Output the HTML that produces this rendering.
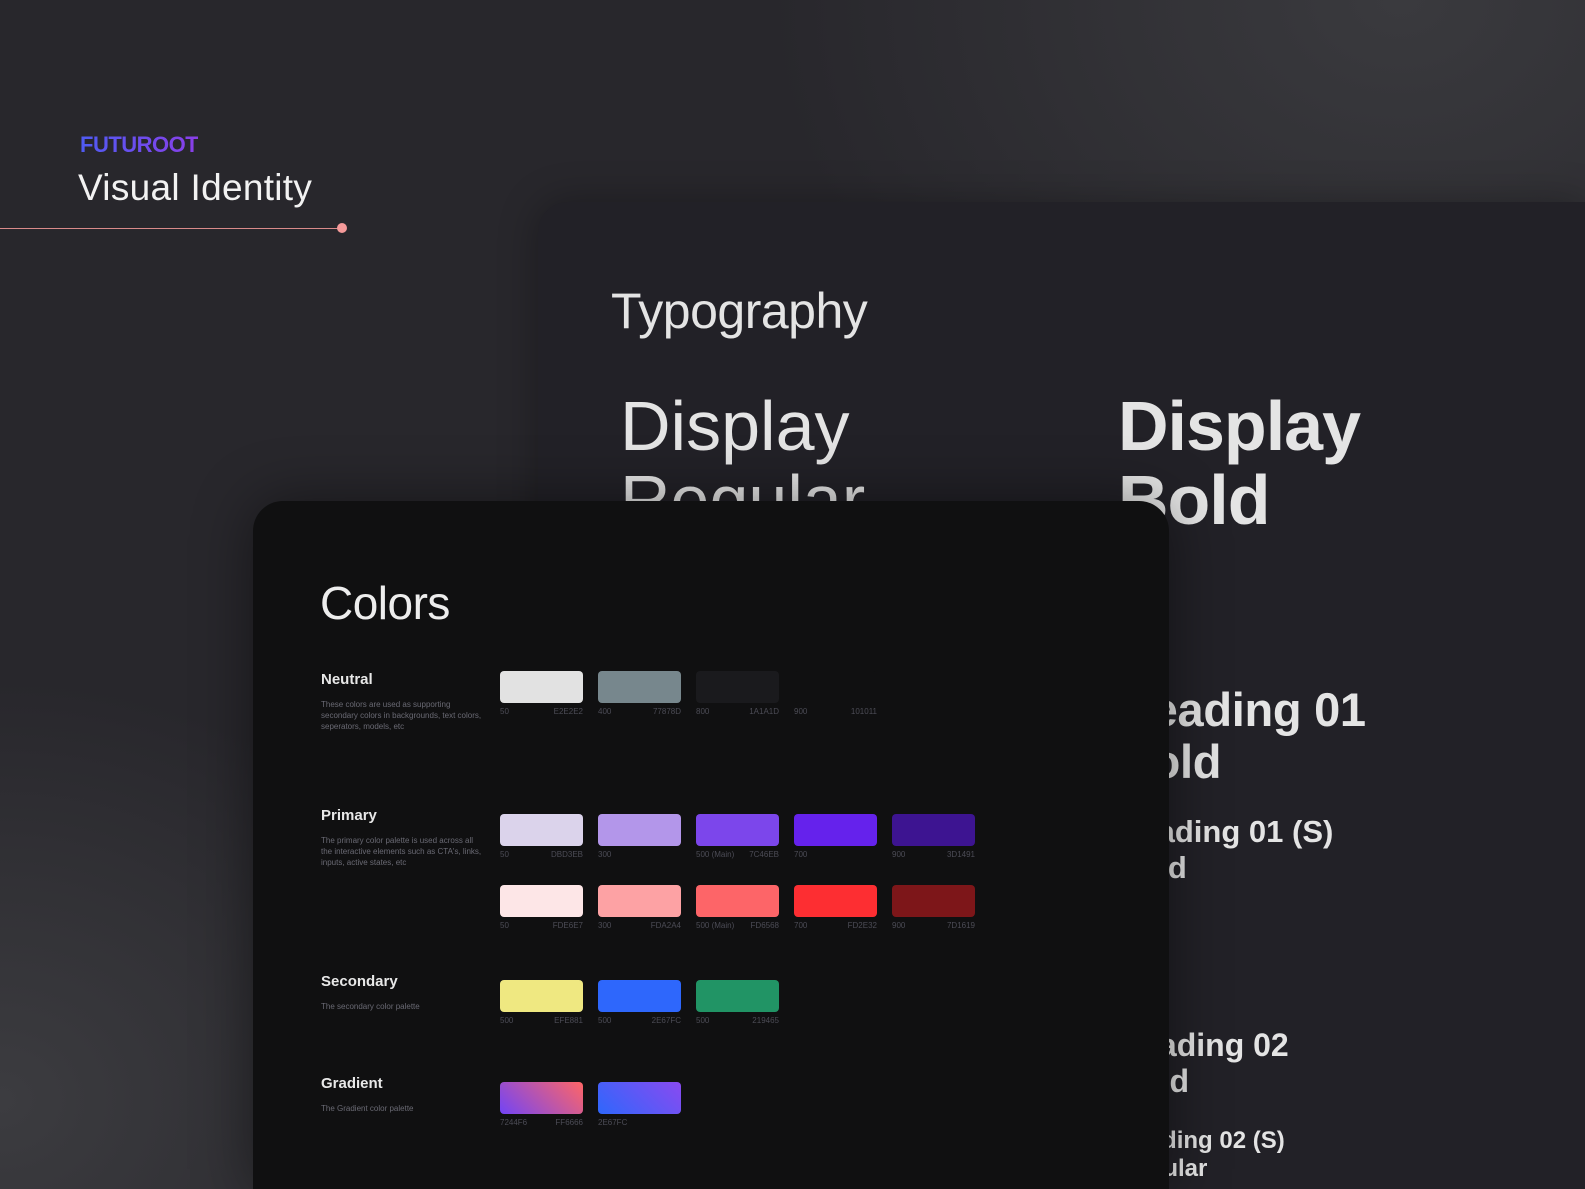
<!DOCTYPE html>
<html><head><meta charset="utf-8"><style>
*{margin:0;padding:0;box-sizing:border-box}
html,body{width:1585px;height:1189px;overflow:hidden}
body{position:relative;font-family:"Liberation Sans",sans-serif;
background:radial-gradient(ellipse 900px 700px at 1400px 0px,#3a3a3e 0%,rgba(58,58,62,0) 70%),radial-gradient(ellipse 700px 600px at 0px 1100px,#3c3c40 0%,rgba(60,60,64,0) 70%),#28272c;}
.abs{position:absolute}
.logo{left:80px;top:132px;font-weight:900;font-size:22px;letter-spacing:-0.5px;background:linear-gradient(90deg,#4f5bf2,#8a3fe8);-webkit-background-clip:text;color:transparent}
.vi{left:78px;top:167px;font-size:37px;color:#f2f2f2;letter-spacing:0.3px}
.line{left:0;top:228px;width:343px;height:1px;background:#d98a8a}
.dot{left:337px;top:223px;width:10px;height:10px;border-radius:50%;background:#f59a9a}
.back{left:538px;top:202px;width:1047px;height:987px;border-radius:30px 0 0 0;background:#222127;box-shadow:0 0 40px rgba(0,0,0,.3);overflow:hidden}
.front{left:253px;top:501px;width:916px;height:688px;border-radius:30px 30px 0 0;background:#101011;box-shadow:0 0 60px rgba(0,0,0,.45)}
.t{color:#e4e4e4}
.swatch{position:absolute;width:83px;height:32px;border-radius:4px}
.lab{position:absolute;width:83px;font-size:8px;color:#4c4c56;display:flex;justify-content:space-between}
.h{position:absolute;left:68px;font-size:15px;font-weight:bold;color:#e8e8e8}
.d{position:absolute;left:68px;font-size:8px;line-height:11px;color:#6a6a74;width:165px}
</style></head><body>
<div class="abs logo">FUTUROOT</div>
<div class="abs vi">Visual Identity</div>
<div class="abs line"></div><div class="abs dot"></div>

<div class="abs back">
  <div class="abs t" style="left:73px;top:80px;font-size:50px;letter-spacing:-0.5px">Typography</div>
  <div class="abs t" style="left:82px;top:187px;font-size:70px;line-height:74px">Display<br>Regular</div>
  <div class="abs t" style="left:580px;top:187px;font-size:70px;line-height:74px;font-weight:bold;letter-spacing:-1px">Display<br>Bold</div>
  <div class="abs t" style="left:580px;top:482px;font-size:47px;line-height:52px;font-weight:bold;letter-spacing:-0.3px">Heading 01<br>Bold</div>
  <div class="abs t" style="left:580px;top:612px;font-size:31px;line-height:36px;font-weight:bold">Heading 01 (S)<br>Bold</div>
  <div class="abs t" style="left:580px;top:825px;font-size:32px;line-height:36px;font-weight:bold">Heading 02<br>Bold</div>
  <div class="abs t" style="left:580px;top:925px;font-size:24px;line-height:28px;font-weight:bold">Heading 02 (S)<br>Regular</div>
</div>

<div class="abs front">
  <div class="abs" style="left:67px;top:75px;font-size:46px;color:#ededed;letter-spacing:-0.5px">Colors</div>

  <div class="h" style="top:170px">Neutral</div>
  <div class="d" style="top:198px">These colors are used as supporting secondary colors in backgrounds, text colors, seperators, models, etc</div>
  <div class="swatch" style="left:247px;top:170px;background:#e2e2e2"></div><div class="lab" style="left:247px;top:206px"><span>50</span><span>E2E2E2</span></div>
  <div class="swatch" style="left:345px;top:170px;background:#77878d"></div><div class="lab" style="left:345px;top:206px"><span>400</span><span>77878D</span></div>
  <div class="swatch" style="left:443px;top:170px;background:#1a1a1d"></div><div class="lab" style="left:443px;top:206px"><span>800</span><span>1A1A1D</span></div>
  <div class="swatch" style="left:541px;top:170px;background:#101011"></div><div class="lab" style="left:541px;top:206px"><span>900</span><span>101011</span></div>

  <div class="h" style="top:306px">Primary</div>
  <div class="d" style="top:334px">The primary color palette is used across all the interactive elements such as CTA's, links, inputs, active states, etc</div>
  <div class="swatch" style="left:247px;top:313px;background:#dbd3eb"></div><div class="lab" style="left:247px;top:349px"><span>50</span><span>DBD3EB</span></div>
  <div class="swatch" style="left:345px;top:313px;background:#b396ea"></div><div class="lab" style="left:345px;top:349px"><span>300</span><span></span></div>
  <div class="swatch" style="left:443px;top:313px;background:#7c46eb"></div><div class="lab" style="left:443px;top:349px"><span>500 (Main)</span><span>7C46EB</span></div>
  <div class="swatch" style="left:541px;top:313px;background:#6522ec"></div><div class="lab" style="left:541px;top:349px"><span>700</span><span></span></div>
  <div class="swatch" style="left:639px;top:313px;background:#3d1491"></div><div class="lab" style="left:639px;top:349px"><span>900</span><span>3D1491</span></div>

  <div class="swatch" style="left:247px;top:384px;background:#fde6e7"></div><div class="lab" style="left:247px;top:420px"><span>50</span><span>FDE6E7</span></div>
  <div class="swatch" style="left:345px;top:384px;background:#fda2a4"></div><div class="lab" style="left:345px;top:420px"><span>300</span><span>FDA2A4</span></div>
  <div class="swatch" style="left:443px;top:384px;background:#fd6568"></div><div class="lab" style="left:443px;top:420px"><span>500 (Main)</span><span>FD6568</span></div>
  <div class="swatch" style="left:541px;top:384px;background:#fd2e32"></div><div class="lab" style="left:541px;top:420px"><span>700</span><span>FD2E32</span></div>
  <div class="swatch" style="left:639px;top:384px;background:#7d1619"></div><div class="lab" style="left:639px;top:420px"><span>900</span><span>7D1619</span></div>

  <div class="h" style="top:472px">Secondary</div>
  <div class="d" style="top:500px">The secondary color palette</div>
  <div class="swatch" style="left:247px;top:479px;background:#efe881"></div><div class="lab" style="left:247px;top:515px"><span>500</span><span>EFE881</span></div>
  <div class="swatch" style="left:345px;top:479px;background:#2e67fc"></div><div class="lab" style="left:345px;top:515px"><span>500</span><span>2E67FC</span></div>
  <div class="swatch" style="left:443px;top:479px;background:#219465"></div><div class="lab" style="left:443px;top:515px"><span>500</span><span>219465</span></div>

  <div class="h" style="top:574px">Gradient</div>
  <div class="d" style="top:602px">The Gradient color palette</div>
  <div class="swatch" style="left:247px;top:581px;background:linear-gradient(45deg,#7244f6,#ff6666)"></div><div class="lab" style="left:247px;top:617px"><span>7244F6</span><span>FF6666</span></div>
  <div class="swatch" style="left:345px;top:581px;background:linear-gradient(45deg,#2e67fc,#8a4af0)"></div><div class="lab" style="left:345px;top:617px"><span>2E67FC</span><span></span></div>
</div>
</body></html>
